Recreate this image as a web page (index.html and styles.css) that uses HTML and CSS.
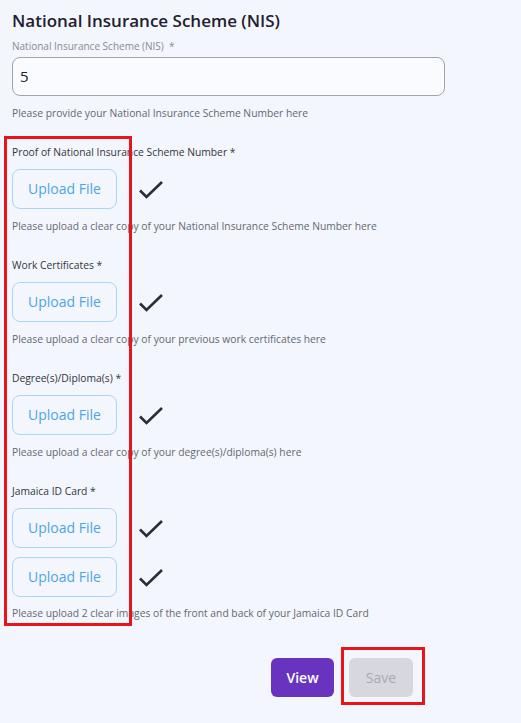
FILE: index.html
```html
<!DOCTYPE html>
<html lang="en">
<head>
<meta charset="utf-8">
<title>NIS</title>
<link rel="stylesheet" href="styles.css">
</head>
<body>
<div class="page">
  <h2 class="title">National Insurance Scheme (NIS)</h2>
  <div class="top-label">National Insurance Scheme (NIS) &nbsp;*</div>
  <div class="input">5</div>
  <div class="help first-help">Please provide your National Insurance Scheme Number here</div>

  <div class="field-label">Proof of National Insurance Scheme Number *</div>
  <div class="upload-row">
    <div class="upload">Upload File</div>
    <svg class="check" width="26" height="20" viewBox="0 0 26 20"><path d="M2 10.5 L8.5 17 L24 2" fill="none" stroke="#2a2d3a" stroke-width="2.6"/></svg>
  </div>
  <div class="help">Please upload a clear copy of your National Insurance Scheme Number here</div>

  <div class="field-label">Work Certificates *</div>
  <div class="upload-row">
    <div class="upload">Upload File</div>
    <svg class="check" width="26" height="20" viewBox="0 0 26 20"><path d="M2 10.5 L8.5 17 L24 2" fill="none" stroke="#2a2d3a" stroke-width="2.6"/></svg>
  </div>
  <div class="help">Please upload a clear copy of your previous work certificates here</div>

  <div class="field-label">Degree(s)/Diploma(s) *</div>
  <div class="upload-row">
    <div class="upload">Upload File</div>
    <svg class="check" width="26" height="20" viewBox="0 0 26 20"><path d="M2 10.5 L8.5 17 L24 2" fill="none" stroke="#2a2d3a" stroke-width="2.6"/></svg>
  </div>
  <div class="help">Please upload a clear copy of your degree(s)/diploma(s) here</div>

  <div class="field-label">Jamaica ID Card *</div>
  <div class="upload-row">
    <div class="upload">Upload File</div>
    <svg class="check" width="26" height="20" viewBox="0 0 26 20"><path d="M2 10.5 L8.5 17 L24 2" fill="none" stroke="#2a2d3a" stroke-width="2.6"/></svg>
  </div>
  <div class="upload-row second">
    <div class="upload">Upload File</div>
    <svg class="check" width="26" height="20" viewBox="0 0 26 20"><path d="M2 10.5 L8.5 17 L24 2" fill="none" stroke="#2a2d3a" stroke-width="2.6"/></svg>
  </div>
  <div class="help tight">Please upload 2 clear images of the front and back of your Jamaica ID Card</div>

  <div class="actions">
    <button class="btn view">View</button>
    <button class="btn save">Save</button>
  </div>

  <div class="mark mark-uploads"></div>
  <div class="mark mark-save"></div>
</div>
</body>
</html>
```
FILE: styles.css
```css
html, body {
  margin: 0;
  padding: 0;
  background: #f3f6fd;
}
body {
  font-family: "Open Sans", "Noto Sans", sans-serif;
  width: 521px;
  height: 723px;
  overflow: hidden;
}
.page {
  position: relative;
  padding: 9px 0 0 12px;
}
.title {
  margin: 0;
  font-size: 17px;
  line-height: 24px;
  font-weight: 600;
  color: #1f2030;
}
.top-label {
  margin-top: 6px;
  font-size: 10px;
  line-height: 14px;
  color: #8a8a8e;
}
.input {
  box-sizing: border-box;
  margin-top: 4px;
  width: 433px;
  height: 39px;
  border: 1px solid #a3a3ab;
  border-radius: 8px;
  background: #fafbff;
  padding-left: 7px;
  font-size: 15px;
  line-height: 37px;
  color: #222;
}
.help {
  margin-top: 10px;
  font-size: 10.3px;
  line-height: 14px;
  color: #666870;
}
.help.tight {
  margin-top: 9px;
}
.field-label {
  margin-top: 25px;
  font-size: 10.3px;
  line-height: 14px;
  color: #34353d;
}
.upload-row {
  margin-top: 10px;
  display: flex;
  align-items: center;
  gap: 21px;
}
.upload-row.second {
  margin-top: 9px;
}
.upload {
  box-sizing: border-box;
  width: 105px;
  height: 40px;
  border: 1px solid #aad6f6;
  border-radius: 8px;
  color: #4ea5e6;
  font-size: 14px;
  line-height: 38px;
  text-align: center;
}
.check {
  display: block;
  margin-top: 2px;
}
.actions {
  margin-top: 38px;
  display: flex;
  gap: 15px;
  padding-left: 259px;
}
.btn {
  font-family: inherit;
  border: none;
  height: 39px;
  border-radius: 6px;
  font-size: 14px;
  font-weight: 600;
  padding: 0;
}
.view {
  width: 63px;
  background: #6834bf;
  color: #ffffff;
}
.save {
  width: 64px;
  background: #d6d8de;
  color: #a8aab2;
  font-weight: 500;
}
.mark {
  position: absolute;
  border: 3px solid #e8141b;
  box-sizing: border-box;
}
.mark-uploads {
  left: 4px;
  top: 136px;
  width: 128px;
  height: 490px;
}
.mark-save {
  left: 341px;
  top: 647px;
  width: 84px;
  height: 58px;
}
```
